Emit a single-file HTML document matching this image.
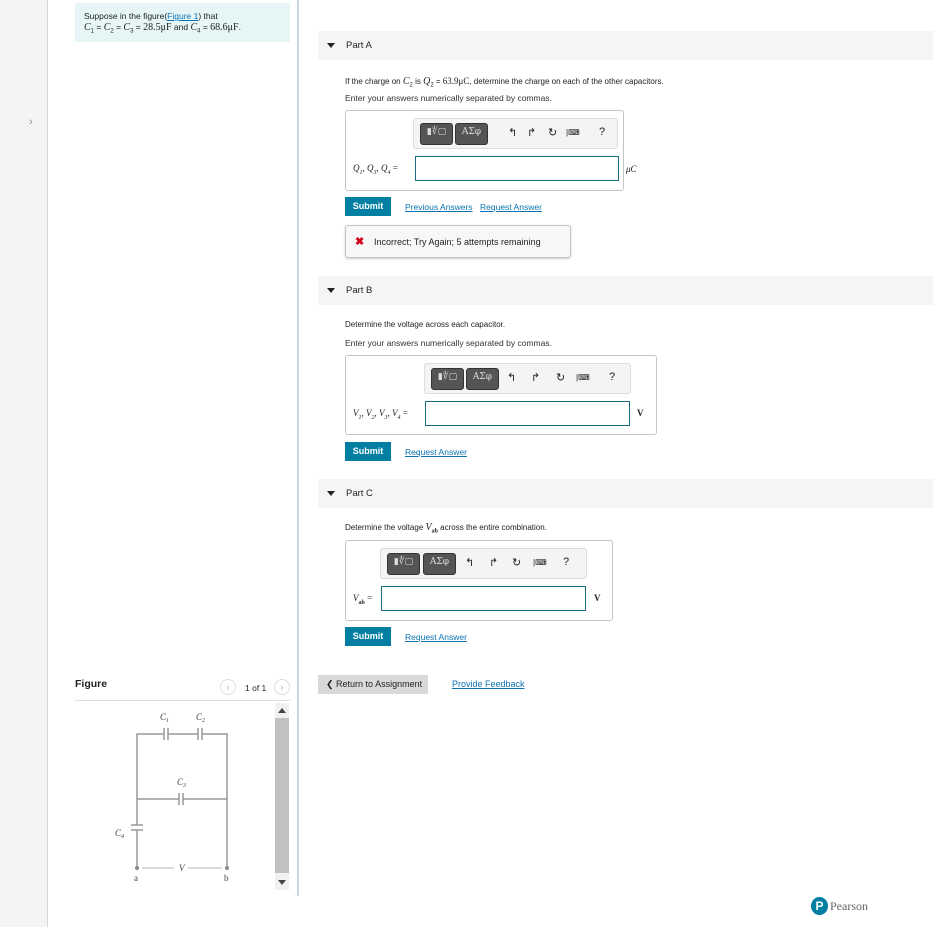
<!DOCTYPE html>
<html><head><meta charset="utf-8"><style>
*{margin:0;padding:0;box-sizing:border-box}
body{width:933px;height:927px;position:relative;background:#fff;font-family:"Liberation Sans",Arial,sans-serif;font-size:9px;color:#222;overflow:hidden}
sub{line-height:0;font-size:6px}
.a{position:absolute}
.side{left:0;top:0;width:48px;height:927px;background:#f4f4f4;border-right:1px solid #d6d6d6}
.hdr{left:318px;width:615px;height:29px;background:#f5f5f5}
.hdr .tri{position:absolute;left:9px;top:12px;width:0;height:0;border-left:4px solid transparent;border-right:4px solid transparent;border-top:5px solid #222}
.hdr span{position:absolute;left:28px;top:9px;font-size:9.5px}
.box{border:1px solid #c4c4c4;border-radius:3px;background:#fff}
.tb{height:31px;border:1px solid #ddd;border-radius:3px;background:#f4f4f4}
.tb .b{position:absolute;top:4px;width:33px;height:22px;background:#555;border-radius:3px;color:#ddd;font-family:"DejaVu Serif",serif;font-size:9px;border:1px solid #333;text-align:center;line-height:16px;white-space:nowrap}
.tb .i{position:absolute;top:7px;font-size:11px;color:#222}
.inp{border:1px solid #1b6e82;height:25px;background:#fff}
.sub{background:#007fa3;color:#fff;font-weight:bold;font-size:9px;width:46px;height:19px;text-align:center;line-height:19px}
.lk{color:#0b73b3;text-decoration:underline;font-size:8.5px}
.m{font-family:"Liberation Serif",serif;font-style:italic;font-size:10px}
</style></head><body>
<div class="a side"><div class="a" style="left:29px;top:116px;color:#888;font-size:11px">›</div></div>
<div class="a" style="left:75px;top:3px;width:215px;height:39px;background:#e6f6f7;padding:8px 9px;font-size:8.5px;line-height:11px">Suppose in the figure(<span style="color:#0b73b3;text-decoration:underline">Figure 1</span>) that<br><span class="m" style="font-size:10px">C</span><sub>1</sub> = <span class="m" style="font-size:10px">C</span><sub>2</sub> = <span class="m" style="font-size:10px">C</span><sub>3</sub> = <span style="font-family:'Liberation Serif';font-size:10px">28.5μF</span> and <span class="m" style="font-size:10px">C</span><sub>4</sub> = <span style="font-family:'Liberation Serif';font-size:10px">68.6μF</span>.</div>
<div class="a" style="left:297px;top:0;width:2px;height:896px;background:#ccd6de"></div>

<div class="a hdr" style="top:31px"><div class="tri"></div><span>Part A</span></div>
<div class="a" style="left:345px;top:76px;font-size:8px">If the charge on <span class="m">C</span><sub>2</sub> is <span class="m">Q</span><sub>2</sub> = <span style="font-family:'Liberation Serif';font-size:9px">63.9μC</span>, determine the charge on each of the other capacitors.</div>
<div class="a" style="left:345px;top:93px;font-size:8.5px;color:#333">Enter your answers numerically separated by commas.</div>
<div class="a box" style="left:345px;top:110px;width:279px;height:81px"></div>
<div class="a tb" style="left:413px;top:118px;width:205px"><div class="b" style="left:6px">▮∜▢</div><div class="b" style="left:41px">ΑΣφ</div><div class="i" style="left:94px">↰</div><div class="i" style="left:113px">↱</div><div class="i" style="left:134px">↻</div><div class="i" style="left:152px;font-size:8px;top:9px">|⌨</div><div class="i" style="left:185px">?</div></div>
<div class="a m" style="left:353px;top:163px;font-size:9px">Q<sub>1</sub>, Q<sub>3</sub>, Q<sub>4</sub> <span style="font-style:normal">=</span></div>
<div class="a inp" style="left:415px;top:156px;width:204px"></div>
<div class="a m" style="left:626px;top:164px;font-size:9px">μC</div>
<div class="a sub" style="left:345px;top:197px">Submit</div>
<div class="a lk" style="left:405px;top:202px">Previous Answers</div>
<div class="a lk" style="left:480px;top:202px">Request Answer</div>
<div class="a box" style="left:345px;top:225px;width:226px;height:33px;background:#f7f7f7;box-shadow:0 1px 2px #ccc"><span class="a" style="left:9px;top:9px;color:#d0021b;font-weight:bold;font-size:11px">✖</span><span class="a" style="left:28px;top:11px;font-size:9px">Incorrect; Try Again; 5 attempts remaining</span></div>

<div class="a hdr" style="top:276px"><div class="tri"></div><span>Part B</span></div>
<div class="a" style="left:345px;top:320px;font-size:8px">Determine the voltage across each capacitor.</div>
<div class="a" style="left:345px;top:338px;font-size:8.5px;color:#333">Enter your answers numerically separated by commas.</div>
<div class="a box" style="left:345px;top:355px;width:312px;height:80px"></div>
<div class="a tb" style="left:424px;top:363px;width:207px"><div class="b" style="left:6px">▮∜▢</div><div class="b" style="left:41px">ΑΣφ</div><div class="i" style="left:82px">↰</div><div class="i" style="left:106px">↱</div><div class="i" style="left:131px">↻</div><div class="i" style="left:151px;font-size:8px;top:9px">|⌨</div><div class="i" style="left:184px">?</div></div>
<div class="a m" style="left:353px;top:408px;font-size:9px">V<sub>1</sub>, V<sub>2</sub>, V<sub>3</sub>, V<sub>4</sub> <span style="font-style:normal">=</span></div>
<div class="a inp" style="left:425px;top:401px;width:205px"></div>
<div class="a" style="left:637px;top:408px;font-family:'Liberation Serif';font-weight:bold;font-size:9px">V</div>
<div class="a sub" style="left:345px;top:442px">Submit</div>
<div class="a lk" style="left:405px;top:447px">Request Answer</div>

<div class="a hdr" style="top:479px"><div class="tri"></div><span>Part C</span></div>
<div class="a" style="left:345px;top:522px;font-size:8px">Determine the voltage <span class="m">V</span><sub style="font-family:'Liberation Serif';font-weight:bold">ab</sub> across the entire combination.</div>
<div class="a box" style="left:345px;top:540px;width:268px;height:81px"></div>
<div class="a tb" style="left:380px;top:548px;width:207px"><div class="b" style="left:6px">▮∜▢</div><div class="b" style="left:42px">ΑΣφ</div><div class="i" style="left:84px">↰</div><div class="i" style="left:108px">↱</div><div class="i" style="left:131px">↻</div><div class="i" style="left:152px;font-size:8px;top:9px">|⌨</div><div class="i" style="left:182px">?</div></div>
<div class="a m" style="left:353px;top:593px;font-size:9px">V<sub style="font-style:normal;font-weight:bold">ab</sub> <span style="font-style:normal">=</span></div>
<div class="a inp" style="left:381px;top:586px;width:205px"></div>
<div class="a" style="left:594px;top:593px;font-family:'Liberation Serif';font-weight:bold;font-size:9px">V</div>
<div class="a sub" style="left:345px;top:627px">Submit</div>
<div class="a lk" style="left:405px;top:632px">Request Answer</div>

<div class="a" style="left:318px;top:675px;width:110px;height:19px;background:#d9d9d9;font-size:9px;line-height:19px;padding-left:8px;color:#222">❮ Return to Assignment</div>
<div class="a lk" style="left:452px;top:679px;font-size:9px">Provide Feedback</div>

<div class="a" style="left:75px;top:678px;font-weight:bold;font-size:10.5px">Figure</div>
<div class="a" style="left:220px;top:679px;width:16px;height:16px;border:1px solid #ddd;border-radius:50%;color:#aaa;font-size:9px;text-align:center;line-height:14px">‹</div>
<div class="a" style="left:245px;top:683px;font-size:8.5px">1 of 1</div>
<div class="a" style="left:274px;top:679px;width:16px;height:16px;border:1px solid #ddd;border-radius:50%;color:#aaa;font-size:9px;text-align:center;line-height:14px">›</div>
<div class="a" style="left:75px;top:700px;width:215px;height:1px;background:#ddd"></div>
<div class="a" style="left:275px;top:703px;width:14px;height:187px;background:#f1f1f1"><div class="a" style="left:0;top:15px;width:14px;height:155px;background:#c1c1c1"></div><div class="a" style="left:3px;top:5px;border-left:4px solid transparent;border-right:4px solid transparent;border-bottom:5px solid #444"></div><div class="a" style="left:3px;top:177px;border-left:4px solid transparent;border-right:4px solid transparent;border-top:5px solid #444"></div></div>
<svg class="a" style="left:110px;top:700px" width="140" height="190" viewBox="0 0 140 190">
<g stroke="#999" stroke-width="1.5" fill="none">
<path d="M27 168V130M27 125V34H54M58 34H88M92 34H117V168"/>
<path d="M54 28v12M58 28v12M88 28v12M92 28v12"/>
<path d="M27 99H69M73 99H117M69 93v12M73 93v12"/>
<path d="M21 125h12M21 130h12"/>
<path d="M32 168H64M78 168H112" stroke-width="0.8"/>
</g>
<circle cx="27" cy="168" r="2" fill="#888"/><circle cx="117" cy="168" r="2" fill="#888"/>
<g font-family="Liberation Serif" font-style="italic" font-size="9" fill="#444">
<text x="50" y="20">C<tspan font-size="6" dy="2">1</tspan></text>
<text x="86" y="20">C<tspan font-size="6" dy="2">2</tspan></text>
<text x="67" y="85">C<tspan font-size="6" dy="2">3</tspan></text>
<text x="5" y="136">C<tspan font-size="6" dy="2">4</tspan></text>
<text x="69" y="171">V</text>
<text x="24" y="181" font-style="normal">a</text><text x="114" y="181" font-style="normal">b</text>
</g></svg>

<div class="a" style="left:811px;top:897px;width:17px;height:18px;border-radius:50%;background:#007fa3;color:#fff;font-weight:bold;font-size:12px;text-align:center;line-height:18px">P</div>
<div class="a" style="left:830px;top:899px;font-family:'Liberation Serif';font-size:12px;color:#666">Pearson</div>
</body></html>
